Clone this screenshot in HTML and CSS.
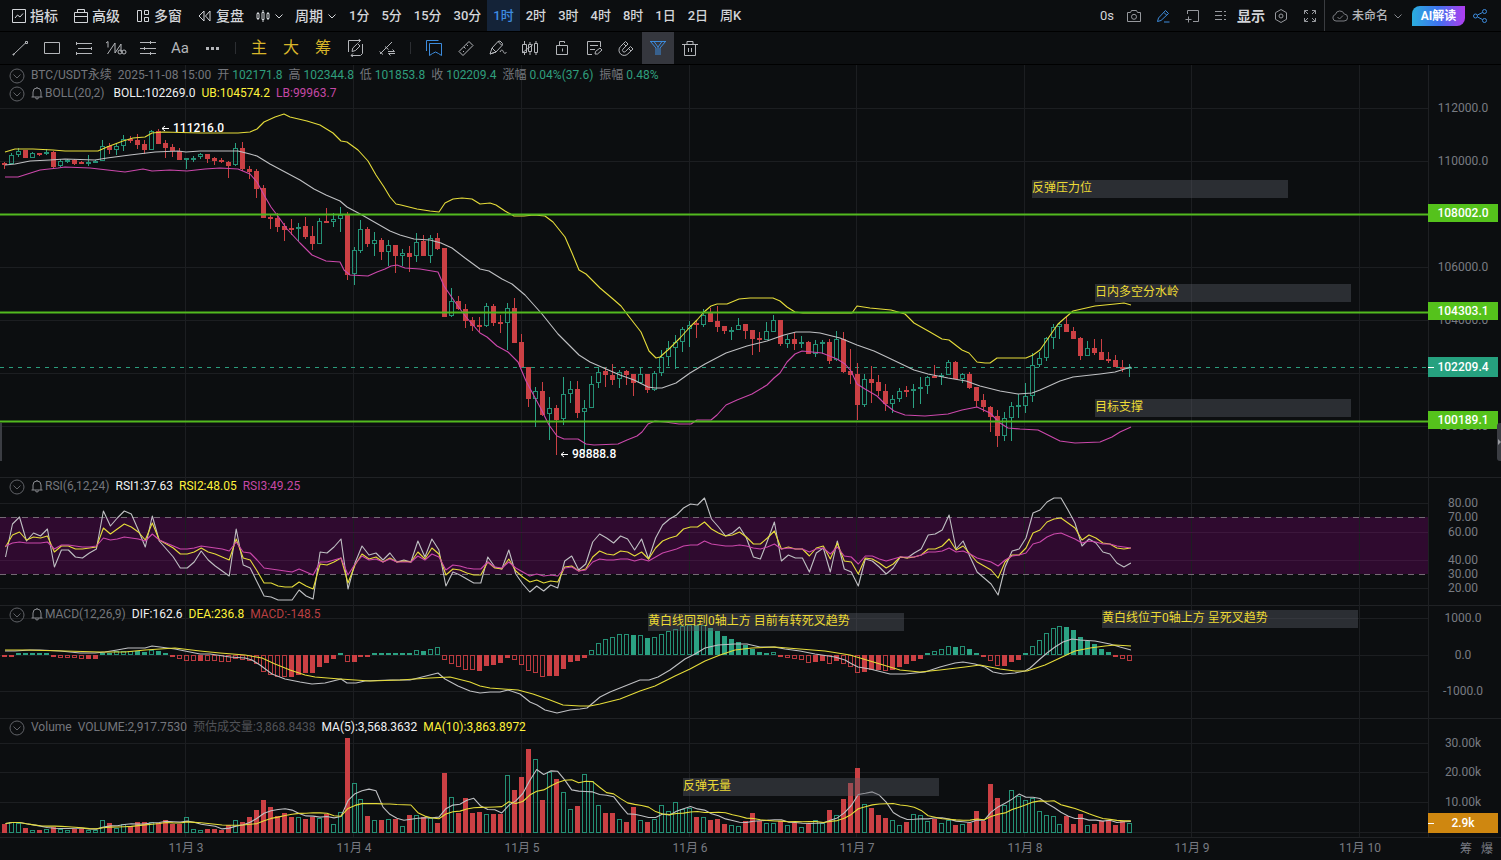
FILE: index.html
```html
<!DOCTYPE html>
<html lang="zh-CN">
<head>
<meta charset="utf-8">
<title>BTC/USDT永续</title>
<link rel="stylesheet" href="styles.css">
</head>
<body>
<svg class="sprite" aria-hidden="true">
  <symbol id="chevron" viewBox="0 0 8 14"><path d="M.5 5.5 4 9l3.500-3.500"/></symbol>
  <symbol id="fold" viewBox="0 0 16 16"><circle cx="8" cy="8" r="7"/><path d="M4.500 6.500 8 10l3.500-3.500"/></symbol>
  <symbol id="bell" viewBox="0 0 12 14"><path d="M.5 11h11M2 11V6a4 4 0 0 1 8 0v5M4.500 11.500a1.500 1.500 0 0 0 3 0M6 2V1"/></symbol>
</svg>
<div class="app">
  <header class="topbar">
    <div class="tools">
      <button class="tool"><svg class="icon" viewBox="0 0 14 14"><path d="M.5 .5h13v13H.5zM3 9l2.500-3L8 8l3-3.500"/></svg>指标</button>
      <button class="tool"><svg class="icon" viewBox="0 0 14 14"><path d="M.5 3.500h13v10H.5zM.5 7.500h13M3.500 3.500v-3h7v3"/></svg>高级</button>
      <button class="tool"><svg class="icon" viewBox="0 0 14 14"><path d="M1.500 1.500h4v11h-4zM8.500 1.500h4v4h-4zM8.500 8.500h4v4h-4z"/></svg>多窗</button>
      <button class="tool"><svg class="icon" viewBox="0 0 14 14"><path d="M6 2 1 7l5 5zM12 2 7.500 7l4.500 5z"/></svg>复盘</button>
    </div>
    <button class="tool kind" aria-label="K线类型"><svg class="icon" viewBox="0 0 14 14"><path d="M1 4.500h2v5H1zM6 3.500h2v7H6zM11 4.500h2v5h-2zM2 3v1.500M2 9.500V11M7 1v2.500M7 10.500V13M12 3v1.500M12 9.500V11"/></svg><svg class="chev"><use href="#chevron"/></svg></button>
    <button class="tool period">周期<svg class="chev"><use href="#chevron"/></svg></button>
    <nav class="intervals">
      <button>1分</button><button>5分</button><button>15分</button><button>30分</button><button class="active">1时</button><button>2时</button><button>3时</button><button>4时</button><button>8时</button><button>1日</button><button>2日</button><button>周K</button>
    </nav>
    <div class="actions">
      <span class="timer">0s</span>
      <button aria-label="截图"><svg class="icon dim" viewBox="0 0 14 14"><path d="M.5 3.500h3l1-2h5l1 2h3v9H.5z"/><circle cx="7" cy="7.800" r="2.500"/></svg></button>
      <button aria-label="画线"><svg class="icon blue" viewBox="0 0 14 14"><path d="M1.500 12.500 2.500 9 9.500 1.500l3 3L5 11.500zM8 3.500l2.500 2.500M8 13h5.500"/></svg></button>
      <button aria-label="添加窗口"><svg class="icon" viewBox="0 0 14 14"><path d="M2.500 5V1.500h11v11H8M.5 10.500h6M3.500 7.500v6"/></svg></button>
      <button aria-label="列表"><svg class="icon dim" viewBox="0 0 14 14"><path d="M1 2.500h7M1 6.500h7M1 10.500h7M10 2.500h2M10 6.500h2M10 10.500h2"/></svg></button>
      <button class="show">显示</button>
      <button aria-label="设置"><svg class="icon" viewBox="0 0 14 14"><path d="M7 .5l5.500 3.200v6.600L7 13.500l-5.500-3.200V3.700z"/><circle cx="7" cy="7" r="2"/></svg></button>
      <button aria-label="全屏"><svg class="icon" viewBox="0 0 14 14"><path d="M1.500 5V1.500H5M9 1.500h3.500V5M12.500 9v3.500H9M5 12.500H1.500V9M1.500 1.500 5 5M12.500 1.500 9 5M12.500 12.500 9 9M1.500 12.500 5 9"/></svg></button>
    </div>
    <div class="account">
      <button class="layout"><svg class="cloud" viewBox="0 0 16 14"><path d="M4 12a3.300 3.300 0 0 1-.6-6.500A4.600 4.600 0 0 1 12.200 5 3.500 3.500 0 0 1 12 12zM5.500 8l2 2 3.500-3.500"/></svg>未命名<svg class="chev"><use href="#chevron"/></svg></button>
      <button class="ai">AI解读</button>
      <button aria-label="分享"><svg class="icon blue" viewBox="0 0 14 14"><circle cx="2.500" cy="7" r="2"/><circle cx="11.500" cy="2.500" r="2"/><circle cx="11.500" cy="11.500" r="2"/><path d="M4.500 6 9.500 3.500M4.500 8l5 2.500"/></svg></button>
    </div>
  </header>

  <div class="drawbar">
    <button aria-label="线段"><svg class="glyph" viewBox="0 0 18 18"><path d="M3 15 15 3.500M1.500 15.500h2M2.500 14.500v2M14.500 2.500h2v2h-2z"/></svg></button>
    <button aria-label="矩形"><svg class="glyph" viewBox="0 0 18 18"><path d="M1.500 3.500h15v11h-15z"/></svg></button>
    <button aria-label="平行线"><svg class="glyph" viewBox="0 0 18 18"><path d="M1 4.500h16M3 9.500h14M1 14.500h16M1.500 3v3M16.500 8v3M1.500 13v3"/></svg></button>
    <button aria-label="波浪"><svg class="glyph wide" viewBox="0 0 22 18"><path d="M1 4l2-1.500v6M2.500 15 10 4v10l6-9v8"/><circle cx="15" cy="13" r="2"/><circle cx="19" cy="13" r="2"/></svg></button>
    <button aria-label="水平线"><svg class="glyph" viewBox="0 0 18 18"><path d="M1 3.500h16M1 9.500h16M1 14.500h16M11.500 2v3M5.500 8v3M11.500 13v3"/></svg></button>
    <button class="aa">Aa</button>
    <button aria-label="更多"><svg class="glyph solid" viewBox="0 0 18 18"><path d="M3 8h3v3H3zM8 8h3v3H8zM13 8h3v3h-3z"/></svg></button>
    <i class="split"></i>
    <button class="gold">主</button>
    <button class="gold">大</button>
    <button class="gold">筹</button>
    <button aria-label="连续画线"><svg class="glyph" viewBox="0 0 18 18"><path d="M2.500 13V1.500h12M16.500 5v9.500l-2 2H5M12.500 0l2 1.500-2 2M7 14.500l-2 2 2 1.500M6 12.500l.8-3.500 4.700-4.500 2.500 2.500-4.500 4.500z"/></svg></button>
    <button aria-label="切换画线"><svg class="glyph" viewBox="0 0 18 18"><path d="M2 15 14 3M1.500 12.500l3.500 3M7 7.500l3.500 3M10 12.500h6.500l-2-2M17 14.500h-6.500l2 2"/></svg></button>
    <i class="split"></i>
    <button aria-label="收藏"><svg class="glyph blue" viewBox="0 0 18 18"><path d="M4.500 4.500h12v12l-3-2-3-1.500-3 1.500-3 2zM1.500 12V1.500h12"/></svg></button>
    <button aria-label="测量"><svg class="glyph" viewBox="0 0 18 18"><path d="M2 12.500 12 2.500l4 4-10 10zM7 8l1.500 1.500M9.500 5.500 11 7M6 12l1 1"/></svg></button>
    <button aria-label="画笔"><svg class="glyph" viewBox="0 0 18 18"><path d="M1 15l2-6L9 2.500l4 4L7 13zM1 15l6-2M9 2.500l2-.5 2.500 2.500-.5 2M3 9l4 4M11 13c2-4 3-1 3.500 0s1.500 2.500 3 0"/></svg></button>
    <button aria-label="K线测量"><svg class="glyph" viewBox="0 0 18 18"><path d="M1.500 5.500h4v8h-4zM7.500 5.500h3v7h-3zM13.500 4.500h3v9h-3zM3.500 2v3.500M3.500 13.500V16M9 3v2.500M9 12.500V16M15 2v2.500M15 13.500V16M1 14 12 5.500"/></svg></button>
    <button aria-label="锁定"><svg class="glyph" viewBox="0 0 18 18"><path d="M3.500 6.500h11v9h-11zM6.500 6.500v-4h5V4M9.500 9.500v3"/></svg></button>
    <button aria-label="笔记"><svg class="glyph" viewBox="0 0 18 18"><path d="M15.500 8V2.500h-13v13H7M5 6.500h8M5 10.500h5M10 15l.5-2.500L15 9l2 2-4.500 4z"/></svg></button>
    <button aria-label="磁吸"><svg class="glyph" viewBox="0 0 18 18"><path d="M8.500 2.500 3.500 7.500a5.200 5.200 0 0 0 7.400 7.400L16 10l-2.500-2.500-5.200 5.100a1.700 1.700 0 0 1-2.400-2.400L11 5zM6.500 4.500 9 7M11.500 9.500 14 12"/></svg></button>
    <button class="on" aria-label="筛选"><svg class="glyph blue" viewBox="0 0 18 18"><path d="M1 2.500h16M1.500 2.500 7 9v7M16.500 2.500 11 9v7M5 2.500 9 8l4-5.500M9 8v8"/></svg></button>
    <button aria-label="删除"><svg class="glyph" viewBox="0 0 18 18"><path d="M1 5.500h16M3.500 5.500v11h11v-11M6 5V2.500h6V5M7.500 9v4M10.500 9v4"/></svg></button>
  </div>

  <main class="charts">
    <section class="pane main">
      <svg class="plot" id="price" viewBox="0 65 1428 412" preserveAspectRatio="none"></svg>
      <div class="axis" id="price-axis"></div>
      <div class="notes" id="price-notes"></div>
      <div class="legend">
        <p><svg class="fold"><use href="#fold"/></svg>BTC/USDT永续&nbsp; 2025-11-08 15:00&nbsp; 开 <b class="up">102171.8</b>&nbsp; 高 <b class="up">102344.8</b>&nbsp; 低 <b class="up">101853.8</b>&nbsp; 收 <b class="up">102209.4</b>&nbsp; 涨幅 <b class="up">0.04%(37.6)</b>&nbsp; 振幅 <b class="up">0.48%</b></p>
        <p><svg class="fold"><use href="#fold"/></svg><svg class="bell"><use href="#bell"/></svg>BOLL(20,2)<span class="vals"><b class="white">BOLL:102269.0</b><b class="yellow">UB:104574.2</b><b class="pink">LB:99963.7</b></span></p>
      </div>
    </section>
    <section class="pane rsi">
      <svg class="plot" id="rsi" viewBox="0 477 1428 128" preserveAspectRatio="none"></svg>
      <div class="axis" id="rsi-axis"></div>
      <div class="legend">
        <p><svg class="fold"><use href="#fold"/></svg><svg class="bell"><use href="#bell"/></svg>RSI(6,12,24)<span class="vals tight"><b class="white">RSI1:37.63</b><b class="yellow">RSI2:48.05</b><b class="pink">RSI3:49.25</b></span></p>
      </div>
    </section>
    <section class="pane macd">
      <svg class="plot" id="macd" viewBox="0 605 1428 113" preserveAspectRatio="none"></svg>
      <div class="axis" id="macd-axis"></div>
      <div class="notes" id="macd-notes"></div>
      <div class="legend">
        <p><svg class="fold"><use href="#fold"/></svg><svg class="bell"><use href="#bell"/></svg>MACD(12,26,9)<span class="vals tight"><b class="white">DIF:162.6</b><b class="yellow">DEA:236.8</b><b class="red">MACD:-148.5</b></span></p>
      </div>
    </section>
    <section class="pane volume">
      <svg class="plot" id="volume" viewBox="0 718 1428 119" preserveAspectRatio="none"></svg>
      <div class="axis" id="volume-axis"></div>
      <div class="notes" id="volume-notes"></div>
      <div class="legend">
        <p><svg class="fold"><use href="#fold"/></svg>Volume<span class="vals tight"><span>VOLUME:2,917.7530</span><span class="faint">预估成交量:3,868.8438</span><b class="white">MA(5):3,568.3632</b><b class="yellow">MA(10):3,863.8972</b></span></p>
      </div>
    </section>
    <footer class="time">
      <div class="days" id="days"></div>
      <div class="extras"><button>筹</button><button>爆</button></div>
    </footer>
    <i class="grip left"></i>
    <button class="grip right" aria-label="展开侧栏"></button>
  </main>
</div>
<script src="app.js"></script>
</body>
</html>
```

FILE: styles.css
```css
* { box-sizing: border-box; }

body {
  margin: 0;
  background: #0c0e10;
  color: #d3d5d9;
  font: 12px/18px Roboto, "Noto Sans CJK SC", sans-serif;
  overflow: hidden;
}

button {
  border: 0;
  padding: 0;
  margin: 0;
  background: none;
  color: inherit;
  font: inherit;
  display: flex;
  align-items: center;
  justify-content: center;
  white-space: nowrap;
}

svg { fill: none; stroke: currentColor; flex: none; display: block; }
.sprite { width: 0; height: 0; position: absolute; }

.app { display: flex; flex-direction: column; height: 100vh; min-height: 480px; }

/* top bar */
.topbar {
  display: flex;
  align-items: stretch;
  height: 32px;
  flex: none;
  padding-left: 12px;
  border-bottom: 1px solid #000;
}
.tools { display: flex; gap: 16px; }
.tool { gap: 4px; font-size: 14px; font-weight: 500; }
.kind { margin-left: 12px; gap: 5px; }
.period { margin: 0 7px 0 12px; gap: 5px; }
.icon { width: 14px; height: 14px; }
.chev { width: 8px; height: 14px; }
.dim { color: #85878c; }
.blue { color: #3c8bdc; }
.intervals { display: flex; font-size: 13px; font-weight: 500; }
.intervals button { padding: 0 6px; }
.intervals .active { background: #142338; color: #3d8ce0; }
.actions { display: flex; gap: 15px; margin-left: auto; padding-right: 7px; }
.actions .icon:not(.blue) { color: #96989d; }
.timer { align-self: center; font-size: 13px; margin-right: -2px; }
.show { font-size: 14px; font-weight: 700; margin: 0 -6px; }
.account {
  display: flex;
  align-items: center;
  padding: 0 14px 0 7px;
  border-left: 1px solid #3a3c40;
}
.layout { gap: 4px; font-weight: 500; color: #b6b8bc; }
.layout .chev { margin-left: 2px; color: #85878c; }
.cloud { width: 16px; height: 14px; color: #7b7d82; }
.ai {
  height: 20px;
  width: 53px;
  margin: 0 8px 0 10px;
  border-radius: 8px 0 8px 0;
  background: linear-gradient(90deg, #2aaede, #3f72ee 50%, #b13cf0);
  color: #fff;
  font-weight: 700;
}

/* drawing bar */
.drawbar {
  display: flex;
  align-items: stretch;
  height: 33px;
  flex: none;
  padding-left: 4px;
  border-bottom: 1px solid #000;
  color: #b4b6ba;
}
.drawbar button { width: 32px; }
.drawbar .aa { font-size: 15px; }
.drawbar .gold { font-size: 16px; color: #d8b52a; }
.drawbar .on { background: #35373e; }
.glyph { width: 18px; height: 18px; }
.glyph.wide { width: 22px; }
.glyph.solid { fill: currentColor; stroke: none; }
.split { width: 15px; display: flex; align-items: center; justify-content: center; }
.split::before { content: ""; width: 1px; height: 12px; background: #2c2e32; }

/* charts */
.charts { position: relative; display: flex; flex-direction: column; flex: 1; min-height: 0; }
.pane {
  position: relative;
  display: grid;
  grid-template-columns: minmax(0, 1fr) 73px;
  grid-template-rows: minmax(0, 1fr);
  min-height: 0;
}
.pane + .pane { box-shadow: inset 0 1px #202225; }
.main { flex: 412 1 0; }
.rsi { flex: 128 1 0; }
.macd { flex: 113 1 0; }
.volume { flex: 119 1 0; }

.plot { width: 100%; height: 100%; overflow: hidden; stroke: none; }
.plot polyline { fill: none; stroke-width: 1.1; stroke-linejoin: round; }
.plot .grid { stroke: #1c1e21; stroke-width: 1; shape-rendering: crispEdges; }
.plot .level { stroke: #52b91f; stroke-width: 2; }
.plot .last { stroke: #2a9c7c; stroke-dasharray: 4 5; }
.plot .limit { stroke: #756a75; stroke-dasharray: 6 5; }
.plot .band { fill: #2f0a2f; }
.bars rect { shape-rendering: crispEdges; }
.bars .r { fill: #cb4044; }
.bars .g { fill: #2ba283; }
.bars .hr { fill: none; stroke: #b93a3f; }
.bars .hg { fill: none; stroke: #249075; }
.plot .c-white { stroke: #bfc0c3; }
.plot .c-yellow { stroke: #e5dc3a; }
.plot .c-pink { stroke: #cb48ab; }

.axis { position: relative; border-left: 1px solid #1e2023; color: #787b82; text-align: center; }
.axis span { position: absolute; left: 0; right: 4px; transform: translateY(-50%); }
.axis .tag { line-height: 18px; left: -1px; right: 3px; color: #fff; font-weight: 500; }
.axis .green { background: #55c21c; }
.axis .teal { background: #26a17f; line-height: 20px; }
.axis .orange { background: #cf8710; line-height: 20px; }
.axis .teal::before, .axis .orange::before {
  content: "";
  position: absolute;
  left: 0;
  top: 10px;
  width: 6px;
  height: 1px;
  background: #fff;
}

.legend { position: absolute; left: 9px; top: 0; color: #74767c; }
.main .legend { top: 1px; }
.legend p { margin: 0; display: flex; align-items: center; height: 18px; white-space: pre; }
.legend b { font-weight: 400; }
.fold { width: 16px; height: 16px; margin: 2px 6px 0 0; color: #606267; }
.bell { width: 12px; height: 14px; margin-right: 2px; color: #8a8c91; }
.vals { display: flex; gap: 6px; margin-left: 9px; }
.vals.tight { margin-left: 6px; }
.up { color: #2f9e7d; }
.legend .white { color: #f0f1f3; }
.legend .yellow { color: #fff23c; }
.legend .pink { color: #c548a5; }
.legend .red { color: #b84043; }
.faint { color: #505257; }

.notes { position: absolute; inset: 0 73px 0 0; }
.notes .note {
  position: absolute;
  width: 256px;
  height: 18px;
  line-height: 17px;
  background: rgba(88, 90, 100, .42);
  color: #eddb35;
  white-space: nowrap;
}
.notes .mark {
  position: absolute;
  display: flex;
  align-items: center;
  gap: 4px;
  height: 18px;
  color: #fff;
  font-weight: 500;
}
.mark svg { width: 8px; height: 8px; }

.time {
  display: grid;
  grid-template-columns: minmax(0, 1fr) 73px;
  height: 23px;
  flex: none;
  border-top: 1px solid #202225;
  color: #787b82;
}
.days { position: relative; }
.days span { position: absolute; top: 1px; transform: translateX(-50%); white-space: nowrap; }
.extras { display: flex; gap: 9px; align-items: center; justify-content: flex-end; padding-right: 8px; }

.grip { position: absolute; top: 45%; height: 38px; background: #3b3d43; }
.grip.left { left: 0; width: 2px; }
.grip.right { right: 0; width: 4px; border-radius: 3px 0 0 3px; }
.grip.right::before {
  content: "";
  border: 3px solid transparent;
  border-left: 3px solid #9a9ca1;
  border-right: 0;
}
```

FILE: app.js
```js
// One entry per hour: direction, then high, body top, body bottom, low in plot units.
const candles = `R162,163,165,169 G153,155,164,164 G148,151,155,157 R150,150,158,158 G152,153,158,158 R153,153,155,156 G149,152,154,155 R151,152,167,168 G159,161,166,167 G159,160,161,163
R159,160,164,165 R161,162,163,164 G155,162,164,166 G160,161,162,163 G140,146,161,161 R143,146,150,154 G143,146,150,155 G135,139,146,151 R136,139,140,143 R134,140,145,149
R140,144,150,154 G130,131,150,150 R129,131,144,144 R140,143,148,158 R144,147,151,157 R148,151,160,160 G158,158,160,169 G156,158,160,162 G153,154,157,159 R154,154,159,163
R157,158,161,165 R158,160,162,163 R161,162,166,178 G143,148,165,166 R142,148,169,171 R166,169,172,179 R169,171,189,198 R185,188,218,218 R214,217,218,229 R213,218,227,232
R223,226,230,241 R219,228,229,235 G223,227,229,241 R217,226,237,239 R226,236,244,250 G218,221,244,244 R208,221,222,223 G213,219,222,227 G207,215,219,232 R212,215,275,280
G247,250,274,285 G220,229,251,253 R227,229,244,247 G232,240,244,256 R238,240,252,260 G240,245,252,266 R245,245,256,273 G249,253,256,266 R246,253,257,272 G233,242,256,262
R235,241,256,256 G235,238,256,263 R233,238,249,250 R248,248,317,317 G288,301,316,317 R296,301,309,310 R304,309,321,328 R317,320,326,331 R317,325,326,332 G303,306,326,327
R304,306,323,326 R315,322,324,333 G303,308,323,350 R298,308,343,343 R334,342,367,368 R367,367,399,407 G387,391,399,427 R382,391,415,416 G397,408,414,440 R405,408,420,455
G377,394,419,425 G381,389,394,403 R381,389,413,418 G400,408,412,454 G376,384,408,408 G367,372,383,388 R367,371,375,387 R364,375,380,385 G370,372,379,388 R370,371,375,385
R374,374,383,396 G368,374,383,384 R374,374,390,393 G371,373,390,391 G350,357,373,376 G341,348,357,366 G335,342,348,369 G327,329,342,352 G321,325,329,347 R320,323,325,338
G309,315,325,327 R308,313,322,322 R306,321,327,332 R326,326,331,334 G327,330,331,340 G318,325,330,330 R324,324,331,339 R330,330,339,355 R332,338,339,352 G322,331,340,340
G315,320,332,332 R320,320,344,346 G335,339,344,348 R332,339,344,350 G336,342,343,348 R341,342,354,354 G340,344,354,357 G340,342,344,354 R339,342,361,364 G331,339,360,361
R332,339,372,373 R349,371,375,384 R363,374,405,420 G374,379,405,407 R366,379,383,403 R375,382,391,396 R384,391,404,411 G395,399,404,413 G388,391,399,402 R386,390,391,397
G384,389,391,408 G377,387,388,404 G376,377,386,394 R365,376,378,378 G373,375,376,385 G360,362,375,375 R361,362,379,379 G373,374,379,383 R372,374,388,389 R387,387,401,407
R394,400,407,412 R406,407,417,432 R410,416,436,447 G412,418,436,441 G402,406,418,441 G394,405,407,418 G383,396,406,413 G353,365,396,402 G352,358,365,367 G337,338,358,361
G324,327,338,349 G322,324,327,339 R317,324,332,332 R327,331,339,339 R337,338,356,360 G341,348,356,356 R339,348,353,355 R339,352,360,360 R352,359,360,363 R355,360,367,367
R360,367,368,372 G364,367,368,377`.split(/\s+/).map(s => ({ up: s[0] === "G", v: s.slice(1).split(",").map(Number) }));

const upper = "5,152 15,149 33,149 53,150 65,151 98,151 107,147 123,141 133,138 145,137 152,133 163,132 200,133 238,133 250,132 257,129 264,122 275,117 284,114 290,117 307,121 320,125 333,133 341,141 347,142 358,150 368,161 376,175 384,187 390,197 396,204 401,205 417,209 430,211 439,212 445,203 453,199 462,198 472,199 480,204 490,203 496,205 505,211 514,216 524,216 534,215 545,216 553,222 565,237 572,253 579,270 586,274 600,288 613,299 621,306 627,314 641,332 649,351 656,358 660,357 669,349 680,338 690,327 697,320 704,312 711,306 717,304 727,304 739,299 750,298 773,298 780,301 787,307 795,312 803,313 823,313 852,313 857,306 870,308 891,310 905,314 914,323 930,332 942,339 949,340 962,350 969,353 977,362 985,363 990,363 997,358 1026,358 1033,355 1040,350 1047,340 1058,324 1073,311 1095,306 1115,304 1124,303 1131,305";
const middle = "5,165 15,164 30,161 50,160 65,159 95,160 107,158 130,155 155,152 178,151 186,152 200,151 238,151 250,154 257,156 270,164 285,172 300,180 314,189 326,195 340,201 347,207 362,215 376,223 390,231 400,235 414,239 430,240 441,243 452,248 465,258 480,269 489,271 502,279 512,284 525,295 542,314 558,334 579,355 590,362 606,369 620,375 634,380 648,387 655,388 662,388 676,383 690,373 705,364 726,353 747,346 767,341 784,335 796,332 810,332 820,333 832,336 840,338 857,345 874,351 891,359 914,370 928,374 948,378 966,381 980,386 1000,391 1018,394 1032,393 1040,390 1060,381 1073,377 1100,374 1115,372 1131,367";
const lower = "5,177 18,177 40,170 58,168 65,167 90,168 125,172 143,169 152,171 170,170 187,171 205,169 220,168 238,169 250,174 257,182 264,195 271,207 280,219 287,229 300,243 312,255 326,261 340,262 344,270 350,275 368,276 377,272 385,269 391,266 397,265 405,268 420,269 438,272 444,286 455,302 466,317 480,333 487,337 497,346 508,352 518,362 526,381 540,407 549,425 557,436 564,439 578,439 586,444 594,445 618,444 627,440 637,436 642,432 648,424 655,421 665,422 679,424 691,424 697,420 711,420 717,415 726,405 737,400 752,394 767,385 774,378 780,373 787,362 795,354 802,351 822,353 837,359 845,364 851,371 857,384 865,389 877,396 885,404 894,411 905,415 925,416 948,414 962,410 977,407 990,413 1000,423 1008,428 1020,429 1038,430 1048,435 1060,441 1075,443 1100,442 1112,437 1120,432 1131,427";

const rsi6 = [557,524,517,541,533,536,529,567,550,550,557,558,553,549,511,526,518,511,514,530,547,516,541,549,557,568,568,562,551,560,566,571,576,529,565,568,582,596,597,600,600,600,590,596,599,552,553,547,539,589,563,546,555,553,560,553,562,560,562,541,557,539,550,586,572,575,579,583,583,557,567,569,550,574,584,592,586,591,585,588,561,556,570,564,542,534,538,543,536,539,550,539,559,538,525,519,515,508,504,505,498,519,527,536,533,527,538,557,559,541,522,561,555,558,558,572,553,548,572,541,569,572,586,559,561,567,574,568,557,558,553,549,535,534,530,515,549,541,557,572,578,584,595,567,551,549,538,513,510,502,498,498,510,523,546,539,543,552,554,563,567,563];
const rsi12 = [547,535,532,540,537,538,536,552,546,546,549,549,548,547,528,534,529,524,527,532,540,523,540,544,548,554,554,552,548,552,554,557,560,539,558,560,571,583,583,586,587,587,582,586,589,564,565,562,558,583,565,554,559,557,562,558,562,561,562,552,559,548,554,575,569,570,573,575,575,562,568,569,559,571,577,582,580,583,581,582,567,566,571,569,557,551,554,555,551,552,556,552,559,548,541,538,536,529,527,527,522,529,533,536,535,532,537,544,544,538,531,549,547,549,549,556,548,546,559,543,561,562,574,558,559,563,568,564,557,558,557,555,549,549,546,539,550,546,554,562,566,570,578,562,555,555,548,533,530,522,519,518,523,528,540,535,538,543,544,548,549,548];
const rsi24 = [546,543,542,543,543,543,542,549,545,545,546,547,547,546,538,540,539,537,538,539,541,534,540,543,546,549,549,548,546,547,548,549,551,542,552,553,560,568,569,570,571,572,569,572,575,562,562,560,558,575,564,556,560,559,562,559,562,562,562,556,560,554,557,570,565,566,568,569,569,562,567,568,562,568,572,576,574,576,575,576,568,567,571,570,562,559,560,560,559,559,561,559,561,557,553,551,549,546,545,545,541,544,545,546,546,545,546,548,549,547,544,549,548,549,549,552,549,548,554,547,556,557,564,556,556,559,561,559,557,557,557,555,552,552,551,548,552,551,554,558,560,562,566,560,556,555,553,544,542,537,534,533,536,539,543,541,542,544,544,546,547,548];

// Histogram heights; a trailing "h" marks an outlined bar.
const hist = "-1 -1 1 1 1 1 1 -1 -3h -3h -3h -4h -4 -4 2 2 4h 4h 4h 4 3 5h 4 2 -1 -4h -6h -6h -6 -6h -6h -7h -7h -4h -5h -6h -9h -17h -20h -22h -22h -22 -20 -18 -18 -12 -8 -4 2 -7h -7 -2 -1 1 1 1 1 1 1 5h 4 6h 8h -5h -9h -12h -15h -15h -16 -11 -10 -8 -3 -5h -10h -16h -18h -22h -21 -21 -14 -7 -6 -3 5h 12h 16h 18h 21h 21h 20 20h 17 18h 21h 24h 26h 29h 30h 30 30h 27 24 19 16 13 10 6 3 1 3h -1 -3h -4h -5h -8h -7 -6 -9h -6 -9h -12h -18h -17 -15 -15 -16h -15 -12 -9 -6 -4 2 4h 6h 9h 8 9h 6 2 -1 -6h -11h -11 -7 -5 1 9h 15h 22h 27h 29h 28 25 18 14 11 6 3 -1 -4h -6h".split(" ");
const dif = "5,651 15,651 30,650 40,650 60,651 80,653 95,653 105,652 117,650 128,648 138,648 145,648 152,646 160,647 175,649 190,652 200,654 210,654 230,657 245,658 252,660 260,665 272,674 285,679 300,682 312,684 325,683 333,681 341,679 347,683 356,683 365,681 390,680 410,680 418,678 430,675 438,673 445,679 458,686 470,691 480,693 490,692 500,692 508,690 520,694 530,702 537,705 545,710 557,713 570,710 580,709 587,708 600,697 610,692 625,686 640,680 649,680 658,677 670,670 685,659 695,654 705,648 718,645 735,644 747,644 760,647 774,647 785,649 800,651 815,654 835,657 845,660 852,664 858,667 870,669 882,672 890,674 905,674 925,672 940,667 955,663 963,662 975,664 985,667 993,672 1003,674 1015,673 1025,671 1030,668 1040,659 1047,653 1055,647 1063,642 1072,639 1080,640 1095,641 1110,644 1120,647 1131,650";
const dea = "5,650 25,650 65,651 100,652 125,652 145,650 175,648 200,651 220,653 245,655 262,658 275,664 290,670 305,675 315,677 340,679 370,681 400,680 430,678 450,677 470,682 480,686 490,688 518,690 533,694 550,700 563,705 580,706 590,706 600,704 620,699 640,691 655,686 675,676 690,669 705,661 720,655 735,650 752,648 775,647 800,649 825,651 850,655 860,658 880,664 900,670 920,672 940,670 965,667 980,665 1000,669 1015,671 1027,671 1045,665 1060,658 1075,651 1090,648 1105,646 1115,645 1131,646";

const vols = [9,11,10,5,3,3,4,6,4,3,4,4,3,3,13,10,5,9,7,11,11,11,10,13,9,9,16,4,3,4,4,3,8,13,11,16,23,33,26,17,20,16,16,14,16,15,19,9,21,95,50,34,17,13,13,14,14,7,18,18,16,15,10,60,36,20,35,20,21,19,19,19,58,43,56,84,74,33,61,54,41,24,27,59,52,28,20,20,14,11,26,13,11,14,28,22,31,24,25,16,16,13,14,9,8,7,12,20,12,10,10,12,8,10,6,9,13,10,23,18,34,50,65,29,25,18,15,13,8,11,19,18,12,14,10,13,8,9,10,22,12,49,35,28,43,37,33,35,22,18,17,9,17,9,19,8,9,12,13,8,12,10];

const STEP = 6.99;
const FIRST = 4.5;
const W = 1428;
const days = [186, 354, 522, 690, 857, 1025, 1192, 1360];
const left = i => Math.round(FIRST + STEP * i - 2.5);

const grid = ys =>
  ys.map(y => `<line class="grid" x1="0" x2="${W}" y1="${y + .5}" y2="${y + .5}"/>`).join("") +
  days.map(x => `<line class="grid" x1="${x - .5}" x2="${x - .5}" y1="0" y2="900"/>`).join("");
const line = (pts, c) => `<polyline class="c-${c}" points="${pts}"/>`;
const series = (ys, c) => line(ys.map((y, i) => `${(FIRST + 1 + STEP * i).toFixed(1)},${y}`).join(" "), c);
const bar = (x, top, bottom, c, hollow) => {
  const h = Math.max(1, bottom - top);
  return hollow && h > 1
    ? `<rect class="h${c}" x="${x + .5}" y="${top + .5}" width="4" height="${h - 1}"/>`
    : `<rect class="${c}" x="${x}" y="${top}" width="5" height="${h}"/>`;
};
const draw = (id, html) => { document.getElementById(id).innerHTML = html; };

// price
draw("price", grid([108, 161, 214, 267, 320, 373, 426]) +
  `<line class="last" x1="0" x2="${W}" y1="367.5" y2="367.5"/><g class="bars">` +
  candles.map(({ up, v: [hi, top, bot, lo] }, i) => {
    const x = left(i), c = up ? "g" : "r";
    const b = Math.max(bot, top + 2);
    return `<rect class="${c}" x="${x + 2}" y="${hi}" width="1" height="${Math.max(0, top - hi)}"/>` +
      `<rect class="${c}" x="${x + 2}" y="${b}" width="1" height="${Math.max(0, lo - b)}"/>` + bar(x, top, b, c, up);
  }).join("") + "</g>" +
  line(upper, "yellow") + line(middle, "white") + line(lower, "pink") +
  [214.5, 312.5, 421.5].map(y => `<line class="level" x1="0" x2="${W}" y1="${y}" y2="${y}"/>`).join(""));

// RSI
draw("rsi", `<rect class="band" x="0" y="517" width="${W}" height="57"/>` + grid([503, 588]) +
  [532, 560].map(y => `<line x1="0" x2="${W}" y1="${y + .5}" y2="${y + .5}" stroke="#3c173c"/>`).join("") +
  [517.5, 574.5].map(y => `<line class="limit" x1="0" x2="${W}" y1="${y}" y2="${y}"/>`).join("") +
  series(rsi6, "white") + series(rsi12, "yellow") + series(rsi24, "pink"));

// MACD
draw("macd", grid([618, 655, 691]) + `<g class="bars">` +
  hist.map((s, i) => {
    const h = parseInt(s, 10);
    return h > 0 ? bar(left(i), 655 - Math.max(2, h), 655, "g", s.endsWith("h"))
      : bar(left(i), 655, 655 + Math.max(2, -h), "r", s.endsWith("h"));
  }).join("") + "</g>" + line(dif, "white") + line(dea, "yellow"));

// volume with its moving averages
const average = n => vols.map((_, i) => {
  const part = vols.slice(Math.max(0, i - n + 1), i + 1);
  return (832.5 - part.reduce((a, b) => a + b, 0) / part.length).toFixed(1);
});
draw("volume", grid([743, 772, 802, 832]) + `<g class="bars">` +
  vols.map((h, i) => bar(left(i), 833 - h, 833, candles[i].up ? "g" : "r", candles[i].up)).join("") + "</g>" +
  series(average(5), "white") + series(average(10), "yellow"));

// axes
const axis = (id, top, height, items) => draw(id, items.map(([t, y, c]) =>
  `<span class="${c ? "tag " + c : ""}" style="top:${(y - top) / height * 100}%">${t}</span>`).join(""));
axis("price-axis", 65, 412, [["112000.0", 108], ["110000.0", 161], ["106000.0", 267], ["104000.0", 320], ["100000.0", 426],
  ["108002.0", 213, "green"], ["104303.1", 311, "green"], ["102209.4", 367, "teal"], ["100189.1", 420, "green"]]);
axis("rsi-axis", 477, 128, [["80.00", 503], ["70.00", 517], ["60.00", 532], ["40.00", 560], ["30.00", 574], ["20.00", 588]]);
axis("macd-axis", 605, 113, [["1000.0", 618], ["0.0", 655], ["-1000.0", 691]]);
axis("volume-axis", 718, 119, [["30.00k", 743], ["20.00k", 772], ["10.00k", 802], ["2.9k", 823, "orange"]]);

// text notes and extreme marks
const arrow = `<svg viewBox="0 0 8 8"><path d="M8 4.500H1M4 2 1 4.500 4 7"/></svg>`;
const notes = (id, top, height, items) => draw(id, items.map(([t, x, y, mark]) =>
  `<div class="${mark ? "mark" : "note"}" style="left:${x / W * 100}%;top:${(y - top) / height * 100}%">${mark ? arrow : ""}${t}</div>`).join(""));
notes("price-notes", 65, 412, [["反弹压力位", 1032, 180], ["日内多空分水岭", 1095, 284], ["目标支撑", 1095, 399],
  ["111216.0", 161, 119, true], ["98888.8", 560, 445, true]]);
notes("macd-notes", 605, 113, [["黄白线回到0轴上方 目前有转死叉趋势", 648, 613], ["黄白线位于0轴上方 呈死叉趋势", 1102, 610]]);
notes("volume-notes", 718, 119, [["反弹无量", 683, 778]]);

draw("days", days.map((x, i) => `<span style="left:${x / W * 100}%">11月 ${i + 3}</span>`).join(""));
```
